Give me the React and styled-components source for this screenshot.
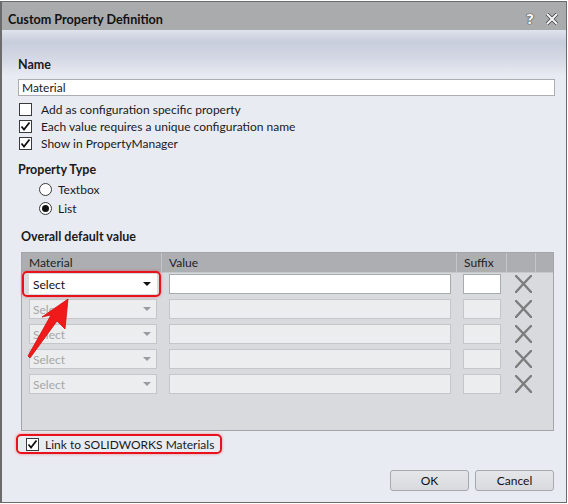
import React from 'react';
import styled, { createGlobalStyle } from 'styled-components';

const GlobalStyle = createGlobalStyle`
  html, body {
    margin: 0;
    padding: 0;
    background: #ffffff;
  }
  * {
    box-sizing: border-box;
  }
`;

const font = `Lato, "Open Sans", "Liberation Sans", sans-serif`;

const Dialog = styled('div')`
  margin-top: 1px;
  width: 567px;
  height: 502px;
  border: 1px solid #6b6b6b;
  border-left-width: 2px;
  display: flex;
  flex-direction: column;
  font-family: ${font};
  font-size: 12px;
  color: #1a1a1a;
  background: #e8ebf2;
`;

const TitleBar = styled('div')`
  height: 28px;
  flex: none;
  background: #aaabad;
  display: flex;
  align-items: center;
  padding: 6px 7px 0 6px;
`;

const Title = styled('span')`
  flex: 1;
  font-size: 12.6px;
  font-weight: 700;
  color: #111;
`;

const TitleButtons = styled('div')`
  display: flex;
  align-items: center;
  gap: 11px;
`;

const HelpGlyph = styled('span')`
  font-family: "DejaVu Sans", sans-serif;
  font-weight: 700;
  font-size: 14px;
  color: #f4f4f4;
  text-shadow: 0 0 1px #444, 0 0 1px #444, 0 0 1px #444;
`;

const Body = styled('div')`
  flex: 1;
  display: flex;
  flex-direction: column;
  padding: 27px 11px 0 16px;
  background: linear-gradient(180deg, #dfe3ec 0px, #c8cddc 12px, #d4d8e4 28px, #e8ebf2 46px, #e8ebf2 100%);
`;

const Label = styled('div')`
  font-weight: 700;
  font-size: 12.5px;
  line-height: 16px;
  height: 16px;
  margin-top: ${p => p.$top || 0}px;
  margin-left: ${p => p.$left || 0}px;
`;

const TextField = styled('div')`
  margin-top: 6px;
  height: 17px;
  background: #ffffff;
  border: 1px solid #abadb3;
  padding-left: 3px;
  line-height: 15px;
`;

const CheckList = styled('div')`
  margin-top: 5px;
  display: flex;
  flex-direction: column;
`;

const CheckRow = styled('div')`
  height: 17px;
  display: flex;
  align-items: center;
  gap: 9px;
  padding-left: 1px;
`;

const Box = styled('span')`
  width: 13px;
  height: 13px;
  flex: none;
  background: #ffffff;
  border: 1px solid #3a3a3a;
  display: flex;
  align-items: center;
  justify-content: center;
`;

const RadioList = styled('div')`
  margin-top: 2px;
  display: flex;
  flex-direction: column;
  padding-left: 21px;
`;

const RadioRow = styled('div')`
  height: 19px;
  display: flex;
  align-items: center;
  gap: 6px;
`;

const RadioDot = styled('span')`
  width: 13px;
  height: 13px;
  flex: none;
  border-radius: 50%;
  border: 1px solid #3a3a3a;
  background: #ffffff;
  display: flex;
  align-items: center;
  justify-content: center;
  &::after {
    content: '';
    width: 7px;
    height: 7px;
    border-radius: 50%;
    background: ${p => (p.$on ? '#111' : 'transparent')};
  }
`;

const Table = styled('div')`
  position: relative;
  margin: 7px 1px 0 3px;
  height: 179px;
  border: 1px solid #a3a5aa;
  background: #d8dade;
  display: flex;
  flex-direction: column;
`;

const HeaderRow = styled('div')`
  height: 20px;
  display: grid;
  grid-template-columns: 140px 295px 50px 29px 1fr;
  background: #adaeb1;
  border-bottom: 1px solid #c6c8cc;
`;

const HeaderCell = styled('div')`
  padding-left: ${p => p.$pad ?? 7}px;
  line-height: 19px;
  color: #222;
  border-right: 1px solid #c5c6c9;
  &:last-child {
    border-right: none;
  }
`;

const Rows = styled('div')`
  display: flex;
  flex-direction: column;
  gap: 5px;
  padding-top: 1px;
`;

const Row = styled('div')`
  height: 20px;
  display: flex;
  align-items: center;
  padding-left: 7px;
`;

const SelectCell = styled('div')`
  position: relative;
  width: 128px;
  margin-right: 12px;
  height: 20px;
  display: flex;
`;

const Select = styled('div')`
  flex: 1;
  display: flex;
  align-items: center;
  justify-content: space-between;
  padding: 0 5px 0 3px;
  background: ${p => (p.$off ? '#ecedef' : '#ffffff')};
  border: 1px solid ${p => (p.$off ? '#c4c6ca' : '#ffffff')};
  color: ${p => (p.$off ? '#a6a7a9' : '#111')};
  &::after {
    content: '';
    border-left: 4px solid transparent;
    border-right: 4px solid transparent;
    border-top: 4px solid ${p => (p.$off ? '#9a9b9e' : '#111')};
  }
`;

const Highlight = styled('div')`
  position: absolute;
  left: -7px;
  top: -3px;
  right: -4px;
  bottom: -3px;
  border: 2px solid #e8121c;
  border-radius: 5px;
  box-shadow: 0 0 3px rgba(232, 18, 28, 0.45);
  pointer-events: none;
`;

const Field = styled('div')`
  width: ${p => p.$w}px;
  margin-right: ${p => p.$gap || 0}px;
  height: 20px;
  background: ${p => (p.$off ? '#ecedef' : '#ffffff')};
  border: 1px solid ${p => (p.$off ? '#c4c6ca' : '#a8aaae')};
`;

const DeleteIcon = styled('span')`
  display: flex;
  margin-left: 14px;
`;

const ArrowLayer = styled('svg')`
  position: absolute;
  left: 0;
  top: 0;
  overflow: visible;
  pointer-events: none;
`;

const LinkRow = styled('div')`
  position: relative;
  margin-top: 3px;
  margin-left: -2px;
  width: 206px;
  height: 20px;
  display: flex;
  align-items: center;
  gap: 6px;
  padding-left: 8px;
  border: 2px solid #e8121c;
  border-radius: 5px;
  box-shadow: 0 0 3px rgba(232, 18, 28, 0.45);
`;

const Footer = styled('div')`
  margin-top: 16px;
  display: flex;
  justify-content: flex-end;
  gap: 6px;
  padding-right: 1px;
`;

const Button = styled('div')`
  width: ${p => p.$w}px;
  height: 21px;
  border: 1px solid #a7a9ae;
  border-radius: 3px;
  background: linear-gradient(180deg, #e4e6ea, #d8dade);
  display: flex;
  align-items: center;
  justify-content: center;
  color: #111;
`;

const Check = () => (
  <svg width="11" height="11" viewBox="0 0 11 11">
    <path d="M1.5 5.5 L4 8.5 L9.5 1.5" fill="none" stroke="#111" strokeWidth="1.8" />
  </svg>
);

const CheckBox = ({ on }) => <Box>{on && <Check />}</Box>;

const CloseGlyph = () => (
  <svg width="14" height="12" viewBox="0 0 14 12">
    <path d="M2 1 L12 11 M12 1 L2 11" stroke="#4a4a4a" strokeWidth="3.6" />
    <path d="M2 1 L12 11 M12 1 L2 11" stroke="#f4f4f4" strokeWidth="2" />
  </svg>
);

const XMark = () => (
  <svg width="17" height="18" viewBox="0 0 17 18">
    <path d="M1 1 Q8 8 16 17 M16 1 Q8 9 1 17" fill="none" stroke="#7c7c7c" strokeWidth="2.4" strokeLinecap="round" />
  </svg>
);

const rows = [0, 1, 2, 3, 4];

export default function App() {
  return (
    <>
      <GlobalStyle />
      <Dialog>
        <TitleBar>
          <Title>Custom Property Definition</Title>
          <TitleButtons>
            <HelpGlyph>?</HelpGlyph>
            <CloseGlyph />
          </TitleButtons>
        </TitleBar>
        <Body>
          <Label>Name</Label>
          <TextField>Material</TextField>
          <CheckList>
            <CheckRow>
              <CheckBox />
              Add as configuration specific property
            </CheckRow>
            <CheckRow>
              <CheckBox on />
              Each value requires a unique configuration name
            </CheckRow>
            <CheckRow>
              <CheckBox on />
              Show in PropertyManager
            </CheckRow>
          </CheckList>
          <Label $top={10}>Property Type</Label>
          <RadioList>
            <RadioRow>
              <RadioDot />
              Textbox
            </RadioRow>
            <RadioRow>
              <RadioDot $on />
              List
            </RadioRow>
          </RadioList>
          <Label $top={11} $left={3}>Overall default value</Label>
          <Table>
            <HeaderRow>
              <HeaderCell>Material</HeaderCell>
              <HeaderCell>Value</HeaderCell>
              <HeaderCell>Suffix</HeaderCell>
              <HeaderCell />
              <HeaderCell />
            </HeaderRow>
            <Rows>
              {rows.map(i => (
                <Row key={i}>
                  <SelectCell>
                    <Select $off={i > 0}>Select</Select>
                    {i === 0 && <Highlight />}
                  </SelectCell>
                  <Field $w={282} $gap={12} $off={i > 0} />
                  <Field $w={38} $off={i > 0} />
                  <DeleteIcon>
                    <XMark />
                  </DeleteIcon>
                </Row>
              ))}
            </Rows>
            <ArrowLayer width="80" height="110">
              <polygon
                points="46,46 43,76 35,68 8,105 6,103 29,62 20,64"
                fill="#f01a1a"
                stroke="#d40f0f"
                strokeWidth="0.8"
                strokeLinejoin="round"
              />
            </ArrowLayer>
          </Table>
          <LinkRow>
            <CheckBox on />
            Link to SOLIDWORKS Materials
          </LinkRow>
          <Footer>
            <Button $w={79}>OK</Button>
            <Button $w={79}>Cancel</Button>
          </Footer>
        </Body>
      </Dialog>
    </>
  );
}
